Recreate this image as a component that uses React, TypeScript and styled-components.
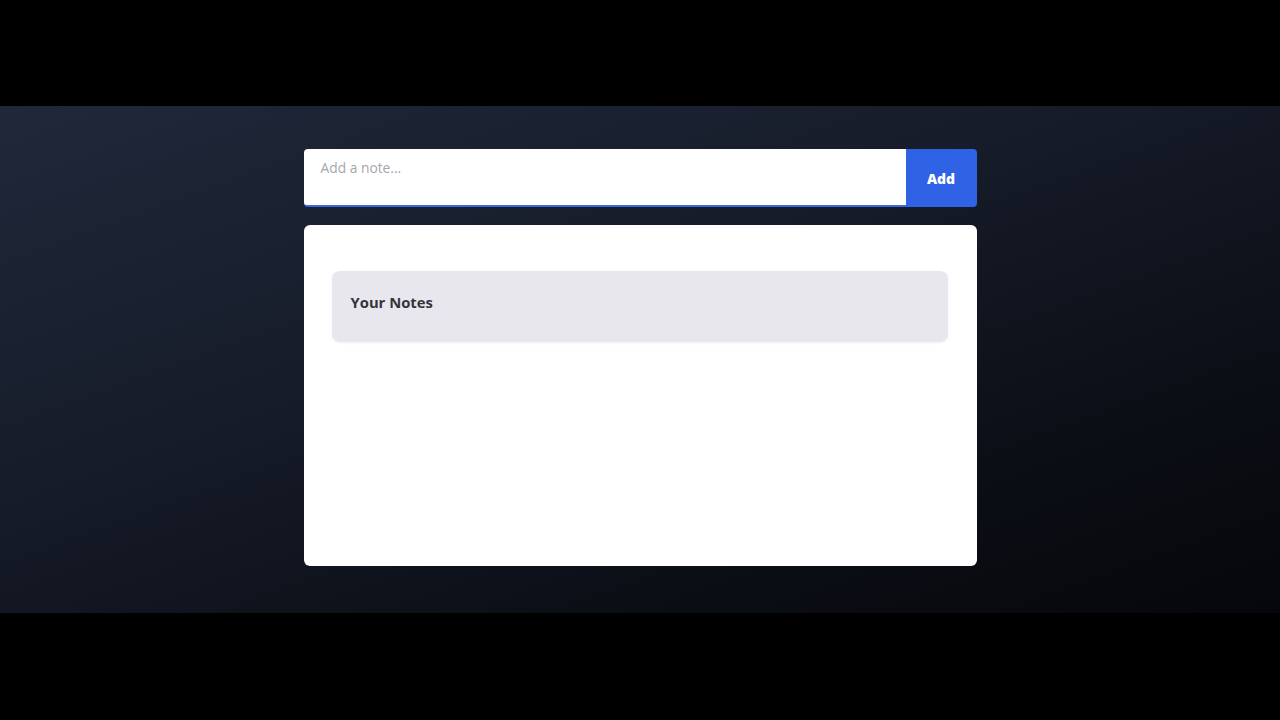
import React from "react";
import styled, { createGlobalStyle } from "styled-components";

const Global = createGlobalStyle`
  html, body { margin: 0; padding: 0; background: #000; }
  body { font-family: "Open Sans", Lato, "Liberation Sans", sans-serif; }
  * { box-sizing: border-box; }
`;

const Frame = styled.div`
  width: 1280px;
  height: 720px;
  display: flex;
  flex-direction: column;
  background: #000;
`;

const Bar = styled.div<{ $h: number }>`
  height: ${(p) => p.$h}px;
  flex: none;
  background: #000;
`;

const Stage = styled.main`
  flex: 1;
  background: linear-gradient(160deg, #20283a 0%, #161c29 40%, #0b0e15 75%, #06070b 100%);
  display: flex;
  justify-content: center;
  padding-top: 43px;
`;

const Column = styled.div`
  width: 673px;
  display: flex;
  flex-direction: column;
  gap: 18px;
`;

const InputRow = styled.form`
  display: flex;
  height: 58px;
`;

const NoteInput = styled.textarea`
  flex: 1;
  resize: none;
  border: none;
  border-bottom: 2px solid #3a68e0;
  border-radius: 4px 0 0 4px;
  background: #fff;
  padding: 9px 17px;
  font-family: "Open Sans", Lato, sans-serif;
  font-size: 13.8px;
  line-height: 20px;
  color: #222;
  outline: none;
  &::placeholder { color: #a6a6ad; }
`;

const AddButton = styled.button`
  width: 71px;
  border: none;
  border-radius: 0 4px 4px 0;
  background: #2f62e5;
  color: #fff;
  font-family: "Open Sans", Lato, sans-serif;
  font-weight: 800;
  font-size: 14px;
  cursor: pointer;
`;

const Card = styled.section`
  height: 341px;
  background: #fff;
  border-radius: 6px;
  padding: 46px 29px 0 28px;
`;

const NotesHeader = styled.div`
  height: 71px;
  background: #e8e7ee;
  border-radius: 8px;
  box-shadow: 0 1px 3px rgba(0, 0, 0, 0.06);
  padding: 21px 18px 0 19px;
`;

const Title = styled.h2`
  margin: 0;
  font-family: "Open Sans", Lato, sans-serif;
  font-size: 14.8px;
  line-height: 20px;
  font-weight: 700;
  color: #34343c;
`;

export default function App() {
  return (
    <>
      <Global />
      <Frame>
        <Bar $h={106} />
        <Stage>
          <Column>
            <InputRow onSubmit={(e) => e.preventDefault()}>
              <NoteInput placeholder="Add a note..." />
              <AddButton type="submit">Add</AddButton>
            </InputRow>
            <Card>
              <NotesHeader>
                <Title>Your Notes</Title>
              </NotesHeader>
            </Card>
          </Column>
        </Stage>
        <Bar $h={107} />
      </Frame>
    </>
  );
}
